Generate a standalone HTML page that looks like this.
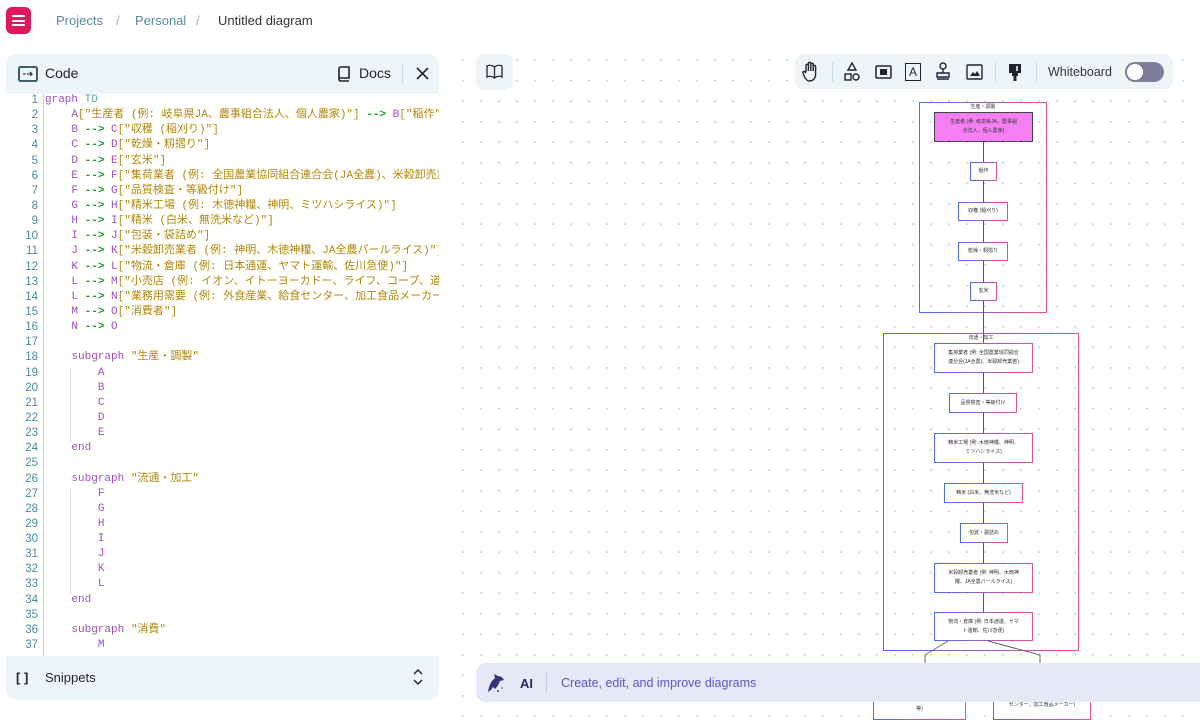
<!DOCTYPE html>
<html><head><meta charset="utf-8">
<style>
*{box-sizing:border-box;margin:0;padding:0}
body{width:1200px;height:717px;overflow:hidden;background:#fff;font-family:"Liberation Sans","Noto Sans CJK JP",sans-serif;position:relative}
.canvas{position:absolute;left:450px;top:44px;right:0;bottom:0;
background-image:radial-gradient(circle,#cfe6e9 1.2px,transparent 1.4px);background-size:18px 20.5px;background-position:4px 6px}
.menu{position:absolute;left:6px;top:7px;width:25px;height:27px;border-radius:6px;background:#e0195e}
.menu i{position:absolute;left:6px;width:13px;height:2px;background:#fff;border-radius:1px}
.crumb{position:absolute;top:13px;font-size:13px;color:#5a8a9a}
.panel{position:absolute;left:6px;top:54px;width:433px;height:646px;background:#eef5f8;border-radius:10px;overflow:hidden}
.ph{height:40px;position:relative}
.code{position:absolute;left:0;top:40px;width:433px;height:562px;background:#fffffd;overflow:hidden;font-family:"Liberation Mono","Noto Sans CJK JP",monospace;font-size:11px}
.ln{position:absolute;left:0;width:32px;text-align:right;color:#4a8aa0;font-size:11.5px;line-height:15px;height:15px;font-family:"Liberation Sans",sans-serif}
.tx{position:absolute;left:39px;white-space:pre;color:#b0880f;line-height:15px;height:15px}
.k{color:#a050c0}.g{color:#1a9a30;font-weight:bold}.s{color:#b0880f}
.gut{position:absolute;left:37px;top:0;width:1px;height:562px;background:#ccc}
.node{position:absolute;font-size:5px;color:#333;text-align:center;display:flex;align-items:center;justify-content:center;line-height:9px;background:#fff;border:1.5px solid;border-image:linear-gradient(90deg,#4a6cf0,#f0508a) 1}
.sg{position:absolute;border:1.5px solid;border-image:linear-gradient(90deg,#4a6cf0,#f0508a) 1;font-size:5px;text-align:center;color:#333}
.ar{position:absolute;width:1px;background:#555}
</style></head><body>
<div class="canvas"></div>
<div class="menu"><i style="top:8px"></i><i style="top:12.5px"></i><i style="top:17px"></i></div>
<div class="crumb" style="left:56px">Projects</div>
<div class="crumb" style="left:116px;color:#aac">/</div>
<div class="crumb" style="left:135px">Personal</div>
<div class="crumb" style="left:196px;color:#aac">/</div>
<div class="crumb" style="left:218px;color:#333">Untitled diagram</div>

<div class="panel">
 <div class="ph">
  <svg style="position:absolute;left:12px;top:12px" width="20" height="16" viewBox="0 0 20 16"><rect x="1" y="1" width="18" height="14" rx="1.5" fill="none" stroke="#2a4a5a" stroke-width="1.8"/><path d="M5 8h3M9 8h5M12 6l2 2-2 2" stroke="#2a4a5a" stroke-width="1.3" fill="none"/></svg>
  <div style="position:absolute;left:39px;top:11px;font-size:14px;color:#223">Code</div>
  <svg style="position:absolute;left:331px;top:12px" width="13" height="16" viewBox="0 0 13 16"><path d="M2 14V2.5A1.5 1.5 0 013.5 1H12v11H3.5A1.5 1.5 0 002 13.5 1.5 1.5 0 003.5 15H12" fill="none" stroke="#223" stroke-width="1.6"/></svg>
  <div style="position:absolute;left:353px;top:11px;font-size:14px;color:#223">Docs</div>
  <div style="position:absolute;left:396px;top:10px;width:1px;height:20px;background:#cde"></div>
  <svg style="position:absolute;left:410px;top:13px" width="13" height="13"><path d="M1 1l11 11M12 1L1 12" stroke="#223" stroke-width="1.6"/></svg>
 </div>
 <div class="code">
  <div class="gut"></div>
  <div style="position:absolute;left:64px;top:274px;width:1px;height:74px;background:#ddd"></div>
  <div style="position:absolute;left:64px;top:395px;width:1px;height:105px;background:#ddd"></div>
  <div style="position:absolute;left:64px;top:592px;width:1px;height:30px;background:#ddd"></div>
  <div id="lines"></div>
 </div>
 <div style="position:absolute;left:10px;top:616px;font-size:13px;color:#223;font-weight:bold">[ ]</div>
 <div style="position:absolute;left:39px;top:616px;font-size:13px;color:#223">Snippets</div>
 <svg style="position:absolute;left:407px;top:614px" width="10" height="18"><path d="M1 6l4-4 4 4M1 12l4 4 4-4" fill="none" stroke="#223" stroke-width="1.4"/></svg>
</div>

<div style="position:absolute;left:476px;top:54px;width:37px;height:36px;background:#eef5f8;border-radius:8px"></div>
<svg style="position:absolute;left:486px;top:64px" width="17" height="15" viewBox="0 0 17 15"><path d="M8.5 3C6 1 3 1 1 2v11c2-1 5-1 7.5 1 2.5-2 5.5-2 7.5-1V2c-2-1-5-1-7.5 1zM8.5 3v11" fill="none" stroke="#223" stroke-width="1.3"/></svg>

<div style="position:absolute;left:795px;top:54px;width:378px;height:35px;background:#eef5f8;border-radius:8px"></div>
<svg style="position:absolute;left:802px;top:61px" width="18" height="21" viewBox="0 0 18 21"><path d="M4 11V4.5a1.2 1.2 0 012.4 0V10M6.4 10V2.5a1.2 1.2 0 012.4 0V10M8.8 10V3.5a1.2 1.2 0 012.4 0V10M11.2 10V5.5a1.2 1.2 0 012.4 0V13c0 4-2.5 7-6 7-2.5 0-3.8-1.5-5-4L1 12c-.6-1.2.8-2.2 1.8-1.2L4 12" fill="none" stroke="#223" stroke-width="1.4" stroke-linejoin="round"/></svg>
<div style="position:absolute;left:832px;top:62px;width:1px;height:20px;background:#cde"></div>
<svg style="position:absolute;left:843px;top:62px" width="18" height="20"><path d="M9 1l4 7H5z" fill="none" stroke="#223" stroke-width="1.4"/><rect x="2" y="12" width="6" height="6" fill="none" stroke="#223" stroke-width="1.4"/><circle cx="13" cy="15" r="3" fill="none" stroke="#223" stroke-width="1.4"/></svg>
<svg style="position:absolute;left:875px;top:65px" width="18" height="15"><rect x="1" y="1" width="15" height="12" rx="1" fill="none" stroke="#223" stroke-width="1.5"/><rect x="5" y="4" width="7" height="6" fill="#223"/></svg>
<div style="position:absolute;left:905px;top:63px;width:16px;height:18px;border:1.3px solid #223;font-size:12px;text-align:center;line-height:16px;color:#223">A</div>
<svg style="position:absolute;left:935px;top:62px" width="16" height="20"><circle cx="8" cy="4" r="3" fill="none" stroke="#223" stroke-width="1.4"/><path d="M8 7v4M2 11h12v4H2zM2 17h12" fill="none" stroke="#223" stroke-width="1.4"/></svg>
<svg style="position:absolute;left:966px;top:64px" width="17" height="16"><rect x="1" y="1" width="15" height="14" rx="1" fill="none" stroke="#223" stroke-width="1.4"/><path d="M4 12l3-4 2 2 2-3 3 5z" fill="#223"/></svg>
<div style="position:absolute;left:995px;top:62px;width:1px;height:20px;background:#cde"></div>
<svg style="position:absolute;left:1008px;top:63px" width="14" height="19"><rect x="1" y="1" width="12" height="9" fill="#223"/><rect x="4" y="10" width="6" height="3" fill="#223"/><rect x="5.5" y="13" width="3" height="5" fill="#223"/><path d="M9 3v5" stroke="#fff" stroke-width="1.5"/></svg>
<div style="position:absolute;left:1036px;top:62px;width:1px;height:20px;background:#cde"></div>
<div style="position:absolute;left:1048px;top:65px;font-size:12.5px;color:#334">Whiteboard</div>
<div style="position:absolute;left:1125px;top:62px;width:39px;height:20px;border-radius:10px;background:#7e7e9c"></div>
<div style="position:absolute;left:1127px;top:64px;width:16px;height:16px;border-radius:50%;background:#fff"></div>

<!-- diagram -->
<div class="sg" style="left:919px;top:102px;width:128px;height:211px">生産・調製</div>
<div class="node" style="left:934px;top:112px;width:99px;height:30px;background:#f57ef5;border:1.5px solid #444;border-image:none">生産者 (例: 岐阜県JA、農事組<br>合法人、個人農家)</div>
<div class="ar" style="left:983px;top:142px;height:20px"></div>
<div class="node" style="left:970px;top:162px;width:27px;height:19px">稲作</div>
<div class="ar" style="left:983px;top:181px;height:21px"></div>
<div class="node" style="left:958px;top:202px;width:50px;height:19px">収穫 (稲刈り)</div>
<div class="ar" style="left:983px;top:221px;height:21px"></div>
<div class="node" style="left:958px;top:242px;width:50px;height:19px">乾燥・籾摺り</div>
<div class="ar" style="left:983px;top:261px;height:21px"></div>
<div class="node" style="left:970px;top:282px;width:27px;height:19px">玄米</div>
<div class="ar" style="left:983px;top:301px;height:42px"></div>
<div class="sg" style="left:883px;top:333px;width:196px;height:318px">流通・加工</div>
<div class="node" style="left:934px;top:343px;width:99px;height:30px">集荷業者 (例: 全国農業協同組合<br>連合会(JA全農)、米穀卸売業者)</div>
<div class="ar" style="left:983px;top:373px;height:20px"></div>
<div class="node" style="left:949px;top:393px;width:68px;height:20px">品質検査・等級付け</div>
<div class="ar" style="left:983px;top:413px;height:20px"></div>
<div class="node" style="left:934px;top:433px;width:99px;height:30px">精米工場 (例: 木徳神糧、神明、<br>ミツハシライス)</div>
<div class="ar" style="left:983px;top:463px;height:20px"></div>
<div class="node" style="left:944px;top:483px;width:79px;height:20px">精米 (白米、無洗米など)</div>
<div class="ar" style="left:983px;top:503px;height:20px"></div>
<div class="node" style="left:960px;top:523px;width:48px;height:20px">包装・袋詰め</div>
<div class="ar" style="left:983px;top:543px;height:20px"></div>
<div class="node" style="left:934px;top:563px;width:99px;height:30px">米穀卸売業者 (例: 神明、木徳神<br>糧、JA全農パールライス)</div>
<div class="ar" style="left:983px;top:593px;height:19px"></div>
<div class="node" style="left:934px;top:612px;width:99px;height:29px">物流・倉庫 (例: 日本通運、ヤマ<br>ト運輸、佐川急便)</div>
<svg style="position:absolute;left:900px;top:640px" width="160" height="77"><path d="M48 1L25 15V77M88 1L140 15V77" fill="none" stroke="#666"/></svg>
<div class="node" style="left:873px;top:690px;width:93px;height:30px">(例: イオン、イトーヨーカドー<br>等)</div>
<div class="node" style="left:993px;top:690px;width:98px;height:30px">センター、加工食品メーカー)</div>

<div style="position:absolute;left:476px;top:663px;width:724px;height:39px;background:#e6e7f7;border-radius:10px 0 0 10px"></div>
<svg style="position:absolute;left:485px;top:672px" width="20" height="22" viewBox="0 0 20 22"><path d="M3 20c1-6 3-11 7-14l-1-4 4 2c3 0 5 2 6 4l-4 1c-1 3-3 6-5 8l-2-2-2 3z" fill="#34347a"/><circle cx="13" cy="19" r="1" fill="#34347a"/><circle cx="17" cy="16" r="0.8" fill="#34347a"/></svg>
<div style="position:absolute;left:520px;top:676px;font-size:13px;color:#2a2a6a;font-weight:bold">AI</div>
<div style="position:absolute;left:546px;top:672px;width:1px;height:20px;background:#c8c9e6"></div>
<div style="position:absolute;left:561px;top:676px;font-size:12.5px;color:#5a5ac0">Create, edit, and improve diagrams</div>

<script>
var L=[
'<span class="k">graph</span> <span style="color:#5aa">TD</span>',
'    <span class="k">A</span>["生産者 (例: 岐阜県JA、農事組合法人、個人農家)"] <span class="g">--></span> <span class="k">B</span>["稲作"]',
'    <span class="k">B</span> <span class="g">--></span> <span class="k">C</span>["収穫 (稲刈り)"]',
'    <span class="k">C</span> <span class="g">--></span> <span class="k">D</span>["乾燥・籾摺り"]',
'    <span class="k">D</span> <span class="g">--></span> <span class="k">E</span>["玄米"]',
'    <span class="k">E</span> <span class="g">--></span> <span class="k">F</span>["集荷業者 (例: 全国農業協同組合連合会(JA全農)、米穀卸売業者)"]',
'    <span class="k">F</span> <span class="g">--></span> <span class="k">G</span>["品質検査・等級付け"]',
'    <span class="k">G</span> <span class="g">--></span> <span class="k">H</span>["精米工場 (例: 木徳神糧、神明、ミツハシライス)"]',
'    <span class="k">H</span> <span class="g">--></span> <span class="k">I</span>["精米 (白米、無洗米など)"]',
'    <span class="k">I</span> <span class="g">--></span> <span class="k">J</span>["包装・袋詰め"]',
'    <span class="k">J</span> <span class="g">--></span> <span class="k">K</span>["米穀卸売業者 (例: 神明、木徳神糧、JA全農パールライス)"]',
'    <span class="k">K</span> <span class="g">--></span> <span class="k">L</span>["物流・倉庫 (例: 日本通運、ヤマト運輸、佐川急便)"]',
'    <span class="k">L</span> <span class="g">--></span> <span class="k">M</span>["小売店 (例: イオン、イトーヨーカドー、ライフ、コープ、道の駅)"]',
'    <span class="k">L</span> <span class="g">--></span> <span class="k">N</span>["業務用需要 (例: 外食産業、給食センター、加工食品メーカー)"]',
'    <span class="k">M</span> <span class="g">--></span> <span class="k">O</span>["消費者"]',
'    <span class="k">N</span> <span class="g">--></span> <span class="k">O</span>',
'',
'    <span class="k">subgraph</span> "生産・調製"',
'        <span class="k">A</span>','        <span class="k">B</span>','        <span class="k">C</span>','        <span class="k">D</span>','        <span class="k">E</span>',
'    <span class="k">end</span>','',
'    <span class="k">subgraph</span> "流通・加工"',
'        <span class="k">F</span>','        <span class="k">G</span>','        <span class="k">H</span>','        <span class="k">I</span>','        <span class="k">J</span>','        <span class="k">K</span>','        <span class="k">L</span>',
'    <span class="k">end</span>','',
'    <span class="k">subgraph</span> "消費"',
'        <span class="k">M</span>'];
var h='';for(var i=0;i<L.length;i++){var t=(Math.round(i*15.14)-1)+'px';h+='<div class="ln" style="top:'+t+'">'+(i+1)+'</div><div class="tx" style="top:'+t+'">'+L[i]+'</div>';}
document.getElementById('lines').innerHTML=h;
</script>
</body></html>
